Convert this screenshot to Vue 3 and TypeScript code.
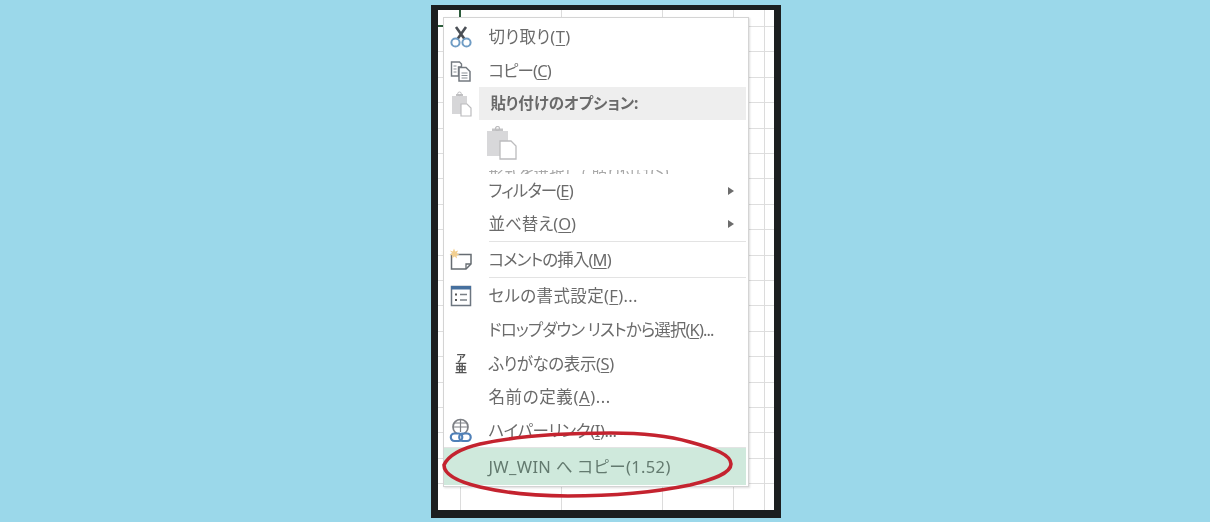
<script setup lang="ts">
interface Item {
  id: string
  pre: string
  key?: string
  post?: string
  icon?: string
  arrow?: boolean
  size: string
  fit?: string
}
const top: Item[] = [
  { id: 'cut', pre: '切り取り(', key: 'T', post: ')', icon: 'cut', size: 'h34', fit: 'loose' },
  { id: 'copy', pre: 'コピー(', key: 'C', post: ')', icon: 'copy', size: 'h33', fit: 'tight' },
]
const sort: Item[] = [
  { id: 'filter', pre: 'フィルター(', key: 'E', post: ')', arrow: true, size: 'h33', fit: 'tight' },
  { id: 'sort', pre: '並べ替え(', key: 'O', post: ')', arrow: true, size: 'h34' },
]
const rest: Item[] = [
  { id: 'format', pre: 'セルの書式設定(', key: 'F', post: ')...', icon: 'format', size: 'h35', fit: 'loose' },
  { id: 'drop', pre: 'ドロップダウン リストから選択(', key: 'K', post: ')...', size: 'h34', fit: 'tight' },
  { id: 'furi', pre: 'ふりがなの表示(', key: 'S', post: ')', icon: 'furi', size: 'h33', fit: 'soft' },
  { id: 'name', pre: '名前の定義(', key: 'A', post: ')...', size: 'h34', fit: 'looser' },
  { id: 'link', pre: 'ハイパーリンク(', key: 'I', post: ')...', icon: 'link', size: 'h33', fit: 'soft' },
]
</script>

<template>
  <main class="page">
    <div class="sheet">
      <span class="tick-v"></span>
      <span class="tick-h"></span>
      <section class="menu">
        <div v-for="it in top" :key="it.id" class="row" :class="it.size">
          <span class="ic">
            <svg v-if="it.icon === 'cut'" width="24" height="26" viewBox="0 0 24 26">
              <path d="M7 3 L15.500 15 M17 3 L8.500 15" stroke="#4a4f55" stroke-width="2.600" fill="none" />
              <circle cx="6.500" cy="18.500" r="4.100" stroke="#6f9cc4" stroke-width="2" fill="none" />
              <circle cx="17.500" cy="18.500" r="4.100" stroke="#6f9cc4" stroke-width="2" fill="none" />
            </svg>
            <svg v-else width="24" height="24" viewBox="0 0 24 24">
              <path d="M2.500 3h8l2 2v3H9.500v9h-7z" fill="#fff" stroke="#747a80" stroke-width="1.400" />
              <path d="M4.500 7h3M4.500 10h3M4.500 13h3" stroke="#8a9096" stroke-width="1.100" />
              <path d="M10 8.500h7l4 4V22H10z" fill="#fff" stroke="#747a80" stroke-width="1.500" />
              <path d="M12.500 14h6M12.500 16.500h6M12.500 19h6" stroke="#8a9096" stroke-width="1.100" />
            </svg>
          </span>
          <span class="label" :class="it.fit">{{ it.pre }}<u>{{ it.key }}</u>{{ it.post }}</span>
        </div>

        <div class="row h33 head">
          <span class="ic">
            <svg width="24" height="26" viewBox="0 0 24 26">
              <path d="M3 5h15v18H3z" fill="#d6d6d8" />
              <path d="M7 5h7V3h-7z" fill="#c2c2c4" />
              <circle cx="10.500" cy="2.800" r="1.800" fill="none" stroke="#bdbdbf" />
              <path d="M12 13h6l4 4v8H12z" fill="#fff" stroke="#bcbcbe" stroke-width="1.200" />
            </svg>
          </span>
          <span class="head-band">貼り付けのオプション:</span>
        </div>

        <div class="paste-box">
          <svg width="34" height="34" viewBox="0 0 34 34">
            <path d="M2 5h21v25H2z" fill="#d8d8da" />
            <path d="M7 5h11V2.500H7z" fill="#c4c4c6" />
            <circle cx="12.500" cy="2.500" r="2" fill="none" stroke="#bcbcbe" stroke-width="1.200" />
            <path d="M15 15h11l5 5v13H15z" fill="#fff" stroke="#bcbcbe" stroke-width="1.300" />
          </svg>
        </div>
        <div class="sliver"><span>形式を選択して貼り付け(S)...</span></div>

        <div v-for="it in sort" :key="it.id" class="row" :class="it.size">
          <span class="ic"></span>
          <span class="label" :class="it.fit">{{ it.pre }}<u>{{ it.key }}</u>{{ it.post }}</span>
          <span v-if="it.arrow" class="arrow"></span>
        </div>

        <hr class="sep" />

        <div class="row h35">
          <span class="ic">
            <svg width="24" height="24" viewBox="0 0 24 24">
              <path d="M2.500 6.500H22V16l-5 5H2.500z" fill="#fff" stroke="#666c72" stroke-width="1.500" />
              <path d="M17 21v-5h5" fill="none" stroke="#666c72" stroke-width="1.300" />
              <path d="M5 0.500l1.200 3 3-1-1.500 2.800 2.800 1.400-3 .8.500 3-2.500-1.900-2.500 1.900.5-3-3-.8 2.800-1.400L.8 2.500l3 1z" fill="#f2cf90" />
            </svg>
          </span>
          <span class="label tight">コメントの挿入(<u>M</u>)</span>
        </div>

        <hr class="sep" />

        <div v-for="it in rest" :key="it.id" class="row" :class="it.size">
          <span class="ic">
            <svg v-if="it.icon === 'format'" width="24" height="24" viewBox="0 0 24 24">
              <path d="M2.500 2.500h19v19h-19z" fill="#fff" stroke="#6d7680" stroke-width="1.500" />
              <path d="M2 2h20v3.500H2z" fill="#46709e" />
              <path d="M6 10.500h2M6 16h2" stroke="#555" stroke-width="2.200" />
              <path d="M11 10.500h7M11 16h7" stroke="#7a8086" stroke-width="1.400" />
            </svg>
            <span v-else-if="it.icon === 'furi'" class="furi"><b class="kana">ア</b><b class="kanji">亜</b></span>
            <svg v-else-if="it.icon === 'link'" width="24" height="26" viewBox="0 0 24 26">
              <circle cx="11.500" cy="9" r="7.500" fill="none" stroke="#7c7f84" stroke-width="1.700" />
              <path d="M4 9h15M4.500 5h14M11.500 1.500V14" fill="none" stroke="#7c7f84" stroke-width="1.200" />
              <rect x="1.800" y="15.500" width="11.500" height="7.500" rx="3.700" fill="#fff" stroke="#4f80b8" stroke-width="2.200" />
              <rect x="10.200" y="15.500" width="11.500" height="7.500" rx="3.700" fill="none" stroke="#4f80b8" stroke-width="2.200" />
            </svg>
          </span>
          <span class="label" :class="it.fit">{{ it.pre }}<u>{{ it.key }}</u>{{ it.post }}</span>
        </div>

        <hr class="sep wide" />

        <div class="row jw">
          <span class="ic"></span>
          <span class="label latin loose">JW_WIN へ コピー(1.52)</span>
        </div>
      </section>

      <svg class="ring" width="296" height="70" viewBox="0 0 296 70">
        <path
          d="M3 35 C8 24 22 18 39 14 C80 5 125 3 170 3 C200 3 228 6 249 12 C275 19 290 25 290 34 C290 44 270 50 249 55 C210 63 170 66 127 66 C90 66 60 62 39 57 C18 52 3 45 3 35 Z"
          fill="none"
          stroke="#c4232f"
          stroke-width="3.600"
        />
      </svg>
    </div>
  </main>
</template>

<style scoped>
.page {
  width: 1210px;
  height: 522px;
  background: #9bd8ea;
  display: flex;
  justify-content: center;
  align-items: flex-start;
  padding: 5px 0 0 1px;
  box-sizing: border-box;
  font-family: "Noto Sans", "Noto Sans CJK JP", sans-serif;
  font-feature-settings: "palt";
}
.sheet {
  position: relative;
  width: 350px;
  height: 513px;
  box-sizing: border-box;
  border-style: solid;
  border-color: #1c1f20;
  border-width: 5px 7px 8px 7px;
  background-color: #fff;
  background-image:
    linear-gradient(#dcdcdc, #dcdcdc),
    linear-gradient(#dcdcdc, #dcdcdc),
    linear-gradient(#dcdcdc, #dcdcdc),
    linear-gradient(#dcdcdc, #dcdcdc),
    linear-gradient(#dcdcdc, #dcdcdc),
    repeating-linear-gradient(to bottom, transparent 0, transparent 24.400px, #dedede 24.400px, #dedede 25.400px);
  background-size: 1px 100%, 1px 100%, 1px 100%, 1px 100%, 1px 100%, 100% 100%;
  background-repeat: no-repeat;
  background-position: 22px 0, 123px 0, 224px 0, 295px 0, 326px 0, 0 -8.400px;
  filter: blur(0.55px);
}
.tick-v {
  position: absolute;
  left: 21px;
  top: 0;
  width: 2px;
  height: 7px;
  background: #2d5c3c;
}
.tick-h {
  position: absolute;
  left: 0;
  top: 15px;
  width: 5px;
  height: 2px;
  background: #2d5c3c;
}
.menu {
  position: absolute;
  left: 5px;
  top: 7px;
  width: 306px;
  height: 470px;
  box-sizing: border-box;
  background: #fff;
  border: 1px solid #d4d4d4;
  box-shadow: 1px 1px 2px rgba(0, 0, 0, 0.14);
  padding: 2px 2px 0 0;
  display: flex;
  flex-direction: column;
  overflow: hidden;
}
.row {
  display: flex;
  align-items: center;
  flex: none;
  position: relative;
}
.h33 { height: 33px; }
.h34 { height: 34px; }
.h35 { height: 35px; }
.ic {
  width: 45px;
  flex: none;
  display: flex;
  justify-content: center;
  box-sizing: border-box;
  padding-right: 10px;
}
.label {
  font-size: 16.500px;
  line-height: 22px;
  color: #6b6b6b;
  white-space: nowrap;
}
.label u {
  text-underline-offset: 2px;
}
.loose { letter-spacing: 0.35px; }
.looser { letter-spacing: 0.6px; }
.soft { letter-spacing: -0.4px; }
.tight { letter-spacing: -0.9px; }
.head-band {
  flex: 1;
  height: 33px;
  line-height: 33px;
  margin-left: -10px;
  padding-left: 12px;
  background: #eeeeee;
  color: #6a6a6a;
  font-size: 15.500px;
  font-weight: 700;
}
.paste-box {
  height: 50px;
  flex: none;
  padding: 6px 0 0 41px;
  box-sizing: border-box;
}
.sliver {
  height: 4px;
  flex: none;
  overflow: hidden;
  padding-left: 45px;
  color: #a8a8a8;
  font-size: 15.500px;
  line-height: 4px;
  white-space: nowrap;
}
.arrow {
  position: absolute;
  left: 284px;
  top: 50%;
  margin-top: -4px;
  border-left: 6px solid #6c6c6c;
  border-top: 4px solid transparent;
  border-bottom: 4px solid transparent;
}
.sep {
  flex: none;
  height: 1px;
  border: 0;
  margin: 0 0 0 45px;
  background: #e3e3e3;
}
.sep.wide {
  margin-left: 0;
}
.furi {
  display: flex;
  flex-direction: column;
  align-items: center;
  color: #555;
}
.kana {
  font-size: 10px;
  line-height: 10px;
}
.kanji {
  font-size: 12px;
  line-height: 12px;
}
.jw {
  height: 37px;
  background: #cfe9dc;
}
.latin {
  color: #637a6f;
}
.ring {
  position: absolute;
  left: 3px;
  top: 420px;
}
</style>
